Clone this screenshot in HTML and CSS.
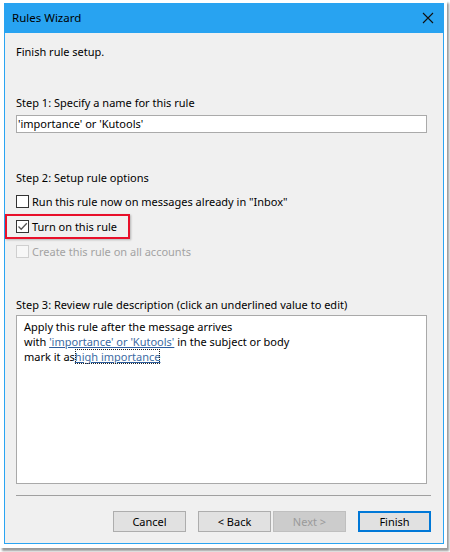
FILE: index.html
```html
<!DOCTYPE html>
<html>
<head>
<meta charset="utf-8">
<link rel="stylesheet" href="styles.css">
</head>
<body>
<div class="screen">
  <div class="dialog">
    <div class="titlebar">
      <span class="title">Rules Wizard</span>
      <svg class="close" width="12" height="12" viewBox="0 0 12 12"><path d="M1 1 L11 11 M11 1 L1 11" stroke="#111" stroke-width="1.1" fill="none"/></svg>
    </div>
    <div class="body">
      <div class="text intro">Finish rule setup.</div>
      <div class="text step1">Step 1: Specify a name for this rule</div>
      <div class="input">'importance' or 'Kutools'</div>
      <div class="text step2">Step 2: Setup rule options</div>
      <div class="options">
        <div class="row"><span class="box"></span><span>Run this rule now on messages already in "Inbox"</span></div>
        <div class="row marked"><span class="box"><svg width="11" height="11" viewBox="0 0 11 11"><path d="M1.5 5.5 L4.2 8.2 L9.8 2.2" stroke="#555" stroke-width="1.3" fill="none"/></svg></span><span>Turn on this rule</span></div>
        <div class="row disabled"><span class="box"></span><span>Create this rule on all accounts</span></div>
      </div>
      <div class="text step3">Step 3: Review rule description (click an underlined value to edit)</div>
      <div class="desc">
        <div class="line">Apply this rule after the message arrives</div>
        <div class="line">with <span class="link">'importance' or 'Kutools'</span> in the subject or body</div>
        <div class="line">mark it as<span class="link focus">high importance</span></div>
      </div>
      <div class="sep"></div>
      <div class="buttons">
        <div class="btn">Cancel</div>
        <div class="btn back">&lt; Back</div>
        <div class="btn off">Next &gt;</div>
        <div class="btn primary">Finish</div>
      </div>
    </div>
  </div>
</div>
</body>
</html>
```
FILE: styles.css
```css
html, body {
  margin: 0;
  padding: 0;
  background: #ffffff;
}
body {
  width: 450px;
  height: 552px;
  overflow: hidden;
  font-family: "Noto Sans", sans-serif;
  font-size: 11px;
  color: #000;
}
.screen {
  width: 447px;
  height: 548px;
  background: #ffffff;
  box-shadow: 2px 3px 2px #9a9a9a;
  padding: 3px 0 0 4px;
  box-sizing: border-box;
}
.dialog {
  width: 440px;
  height: 541px;
  border: 1px solid #2aa4f2;
  border-top: none;
  background: #f0f0f0;
  box-sizing: border-box;
  display: flex;
  flex-direction: column;
}
.titlebar {
  height: 30px;
  background: #28a3f1;
  display: flex;
  align-items: center;
  justify-content: space-between;
  padding: 0 10px 0 8px;
  margin: 0 -1px;
}
.title {
  font-size: 11.5px;
  color: #000;
  line-height: 16px;
}
.close {
  display: block;
}
.body {
  padding: 0 11px 0 11px;
  display: flex;
  flex-direction: column;
}
.text {
  line-height: 16px;
  height: 16px;
  white-space: nowrap;
}
.intro { margin-top: 11px; }
.step1 { margin-top: 35px; }
.input {
  margin-top: 4px;
  width: 411px;
  height: 18px;
  box-sizing: border-box;
  border: 1px solid #aaaaaa;
  background: #fff;
  line-height: 16px;
  padding-left: 1px;
}
.step2 { margin-top: 37px; }
.options {
  margin-top: 3px;
  display: flex;
  flex-direction: column;
}
.row {
  height: 25px;
  display: flex;
  align-items: center;
  gap: 3px;
  white-space: nowrap;
}
.box {
  width: 13px;
  height: 13px;
  box-sizing: border-box;
  border: 1px solid #333;
  background: #fff;
  display: flex;
  align-items: center;
  justify-content: center;
}
.box svg { display: block; }
.marked {
  margin-left: -11px;
  padding-left: 9px;
  width: 125px;
  box-sizing: border-box;
  border: 2px solid #e8102a;
  box-shadow: 1px 1px 2px rgba(0,0,0,0.25);
}
.disabled { color: #a3a3a3; }
.disabled .box {
  border-color: #cfcfcf;
  background: #f7f7f7;
}
.step3 { margin-top: 33px; }
.desc {
  margin-top: 2px;
  width: 411px;
  height: 169px;
  box-sizing: border-box;
  border: 1px solid #a9a9a9;
  background: #fff;
  padding: 3px 0 0 7px;
  white-space: nowrap;
}
.line {
  height: 15px;
  line-height: 15px;
}
.link {
  color: #3d6ba3;
  text-decoration: underline;
  text-decoration-color: #2b5c9c;
}
.focus {
  outline: 1px dotted #222;
  outline-offset: -1px;
}
.sep {
  margin-top: 11px;
  width: 415px;
  height: 1px;
  background: #a0a0a0;
}
.buttons {
  margin-top: 15px;
  display: flex;
  padding-left: 97px;
}
.btn {
  width: 73px;
  height: 21px;
  box-sizing: border-box;
  border: 1px solid #adadad;
  background: #e1e1e1;
  display: flex;
  align-items: center;
  justify-content: center;
  color: #000;
}
.back { margin-left: 12px; }
.off {
  margin-left: 2px;
  background: #cccccc;
  border-color: #bfbfbf;
  color: #9a9a9a;
}
.primary {
  margin-left: 12px;
  border: 2px solid #0078d7;
}
```
